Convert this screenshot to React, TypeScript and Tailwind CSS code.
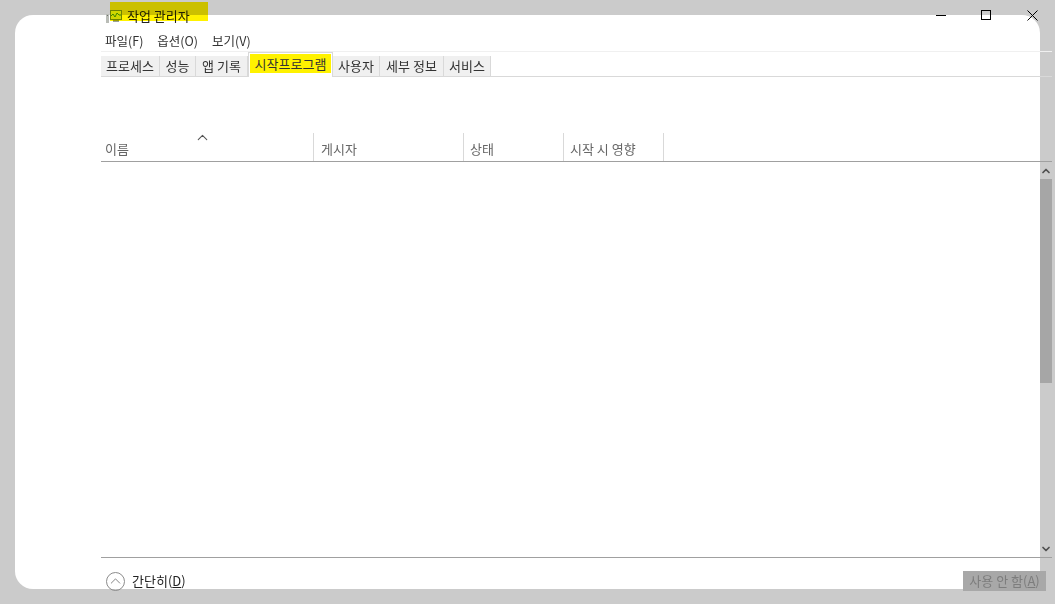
import { ChevronUp } from 'lucide-react';

const tabs = [
    { label: '프로세스', width: 'w-[59px]' },
    { label: '성능', width: 'w-[36px]' },
    { label: '앱 기록', width: 'w-[52px]' },
];

const tabsAfter = [
    { label: '사용자', width: 'w-[47px]' },
    { label: '세부 정보', width: 'w-[64px]' },
    { label: '서비스', width: 'w-[47px]' },
];

const columns = [
    { label: '이름', width: 'w-[213px]', pad: 'pl-[4px]' },
    { label: '게시자', width: 'w-[150px]', pad: 'pl-[7px]' },
    { label: '상태', width: 'w-[100px]', pad: 'pl-[6px]' },
    { label: '시작 시 영향', width: 'w-[100px]', pad: 'pl-[6px]' },
];

const TaskIcon = () => (
    <svg width="16" height="15" viewBox="0 0 16 15" className="shrink-0">
        <rect x="0" y="5" width="3" height="9" fill="#b9bcb6" />
        <rect x="1" y="6" width="1" height="1" fill="#6e706c" />
        <rect x="4.5" y="1.5" width="11" height="9" fill="#cfe3b4" stroke="#6f8a72" />
        <path d="M5 7 L7 5 L9 8 L11 4 L13 6 L15 6" fill="none" stroke="#3f8f5a" strokeWidth="1" />
        <rect x="7" y="11" width="6" height="2" fill="#9aa39a" />
    </svg>
);

const App = () => {
    return (
        <div className="relative w-[1055px] h-[604px] overflow-hidden bg-[#cbcbcb] pt-[15px] pl-[15px] text-[13px] leading-[18px] text-[#333] font-['Noto_Sans_CJK_KR','Noto_Sans',sans-serif]">
            <div className="flex w-[1025px] h-[574px] rounded-[18px] bg-white">
                <div className="flex flex-col -mt-[15px] pl-[86px] w-[1037px] h-[591px] shrink-0">
                    {/* title bar */}
                    <div className="relative flex items-center h-[30px] shrink-0 pl-[5px] pt-[2px]">
                        <TaskIcon />
                        <span className="ml-[5px] -mt-[1px] text-[#222]">작업 관리자</span>
                        <div className="absolute left-[9px] top-[2px] w-[98px] h-[19px] bg-[#fff200] mix-blend-multiply" />
                        <div className="ml-auto flex items-center -mt-[2px] text-black">
                            <div className="w-[10px] h-px bg-black mr-[35px]" />
                            <div className="w-[10px] h-[10px] border border-black mr-[36px]" />
                            <svg width="11" height="11" viewBox="0 0 11 11" className="mr-[14px]">
                                <path d="M0.5 0.5 L10.5 10.5 M10.5 0.5 L0.5 10.5" stroke="#000" strokeWidth="1" />
                            </svg>
                        </div>
                    </div>

                    {/* menu */}
                    <div className="flex items-center gap-[14px] h-[21px] shrink-0 pl-[4px] text-[12.5px] text-[#333]">
                        <span>파일(F)</span>
                        <span>옵션(O)</span>
                        <span>보기(V)</span>
                    </div>
                    <div className="h-px bg-[#f0f0f0] shrink-0" />

                    {/* tabs */}
                    <div className="flex h-[24px] shrink-0">
                        {tabs.map(tab => (
                            <div key={tab.label} className={`${tab.width} flex items-center justify-center bg-[#f0f0f0] border-r border-[#d9d9d9] mt-[4px] h-[20px] pb-[1px]`}>
                                {tab.label}
                            </div>
                        ))}
                        <div className="relative w-[85px] flex items-center justify-center bg-white border border-b-0 border-[#d9d9d9] -mb-px">
                            <div className="absolute left-[1px] top-[1px] w-[81px] h-[19px] bg-[#fff200]" />
                            <span className="relative -mt-[3px]">시작프로그램</span>
                        </div>
                        {tabsAfter.map(tab => (
                            <div key={tab.label} className={`${tab.width} flex items-center justify-center bg-[#f0f0f0] border-r border-[#d9d9d9] mt-[4px] h-[20px] pb-[1px]`}>
                                {tab.label}
                            </div>
                        ))}
                    </div>
                    <div className="h-px bg-[#d9d9d9] shrink-0" />

                    {/* table header */}
                    <div className="flex items-end h-[85px] shrink-0 border-b border-[#a0a0a0] text-[#666]">
                        {columns.map((col, i) => (
                            <div key={col.label} className={`relative ${col.width} ${col.pad} h-[28px] flex items-end pb-[3px] border-r border-[#d9d9d9]`}>
                                {col.label}
                                {i === 0 && <ChevronUp size={17} strokeWidth={1.5} className="absolute left-[93px] -top-[4px] text-[#555]" />}
                            </div>
                        ))}
                    </div>

                    {/* body + scrollbar */}
                    <div className="flex flex-1 min-h-0 border-b border-[#a0a0a0]">
                        <div className="flex-1" />
                        <div className="flex flex-col w-[12px] bg-[#cbcbcb] items-center">
                            <div className="h-[17px] flex items-center justify-center">
                                <ChevronUp size={12} strokeWidth={3.5} className="text-[#505050]" />
                            </div>
                            <div className="w-full h-[204px] bg-[#a6a6a6]" />
                            <div className="flex-1" />
                            <div className="h-[17px] flex items-center justify-center">
                                <ChevronUp size={12} strokeWidth={3.5} className="text-[#505050] rotate-180" />
                            </div>
                        </div>
                    </div>

                    {/* footer */}
                    <div className="flex items-center h-[33px] shrink-0 pl-[5px] pt-[13px]">
                        <div className="w-[19px] h-[19px] rounded-full border border-[#8c8c8c] flex items-center justify-center">
                            <ChevronUp size={18} strokeWidth={1.25} className="text-[#777]" />
                        </div>
                        <span className="ml-[7px] text-[#222]">간단히(<span className="underline">D</span>)</span>
                        <div className="ml-auto mr-[6px] w-[83px] h-[20px] flex items-center justify-center bg-[#a8a8a8] text-[#7d7d7d]">
                            <span>사용 안 함(<span className="underline">A</span>)</span>
                        </div>
                    </div>
                </div>
            </div>
        </div>
    );
};

export default App;
